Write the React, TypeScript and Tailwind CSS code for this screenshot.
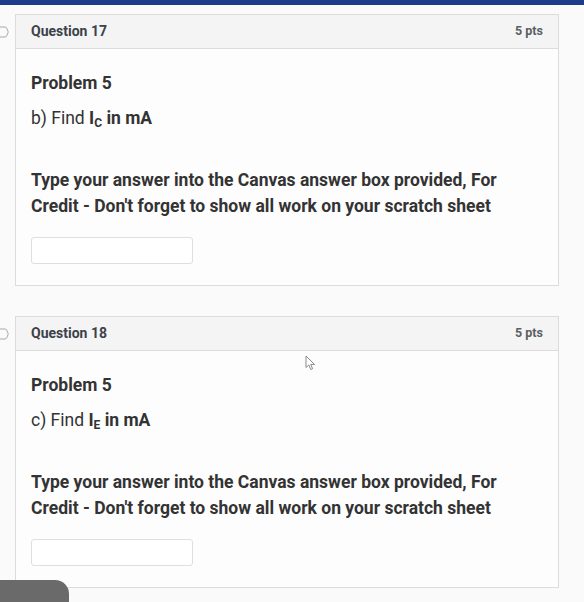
import React from 'react';

interface QuestionProps {
  number: number;
  part: string;
  sub: string;
}

// Small flag marker sitting in the left gutter, partly cut off by the window edge
function FlagMarker() {
  return (
    <svg className="absolute left-0 top-[12px]" width="9" height="12" viewBox="0 0 9 12">
      <path d="M-2 1 H5 Q6 1 6.6 2 L8 5.2 Q8.4 6 8 6.8 L6.6 10 Q6 11 5 11 H-2" fill="none" stroke="#a9a9a9" strokeWidth="1" />
    </svg>
  );
}

function QuestionCard({ number, part, sub }: QuestionProps) {
  return (
    <div className="relative pl-[15px] pr-[25px]">
      <FlagMarker />
      <div className="border border-[#dcdcdc] bg-[#fdfdfd]">
        <div className="h-[34px] flex items-center justify-between px-[15px] bg-[#f4f4f4] border-b border-[#dcdcdc]">
          <span className="text-[14px] font-bold text-[#3b4249]">Question {number}</span>
          <span className="text-[12.5px] font-bold text-[#5b5f63]">5 pts</span>
        </div>
        <div className="px-[15px] pt-[22px] pb-[21px] text-[17.5px] text-[#333]">
          <p className="leading-[24px] font-bold">Problem 5</p>
          <p className="mt-[11px] leading-[24px]">
            {part}) Find{' '}
            <b>
              I<sub className="text-[12px] font-bold">{sub}</sub> in mA
            </b>
          </p>
          <p className="mt-[37px] leading-[26px] font-bold">
            Type your answer into the Canvas answer box provided, For Credit - Don't forget to show all work on your scratch sheet
          </p>
          <div className="mt-[18px] w-[162px] h-[27px] border border-[#dedede] rounded-[3px] bg-white" />
        </div>
      </div>
    </div>
  );
}

export default function App() {
  return (
    <div className="relative w-[584px] h-[602px] overflow-hidden bg-[#fafafa] font-['Roboto',sans-serif]">
      <div className="h-[5px] bg-[#1d3d8b]" />
      <div className="pt-[9px] flex flex-col gap-[30px]">
        <QuestionCard number={17} part="b" sub="C" />
        <QuestionCard number={18} part="c" sub="E" />
      </div>

      {/* mouse pointer */}
      <svg className="absolute left-[305px] top-[355px]" width="12" height="16" viewBox="0 0 12 16">
        <path d="M1 1 L1 12.5 L3.8 10 L5.8 14.5 L7.6 13.7 L5.7 9.4 L9.5 9.4 Z" fill="#fff" stroke="#8a8a8a" strokeWidth="1" strokeLinejoin="round" />
      </svg>

      {/* video overlay tab in the corner */}
      <div className="absolute left-0 bottom-0 w-[69px] h-[22px] bg-[#6a6a6a] rounded-tr-[14px]" />
    </div>
  );
}
